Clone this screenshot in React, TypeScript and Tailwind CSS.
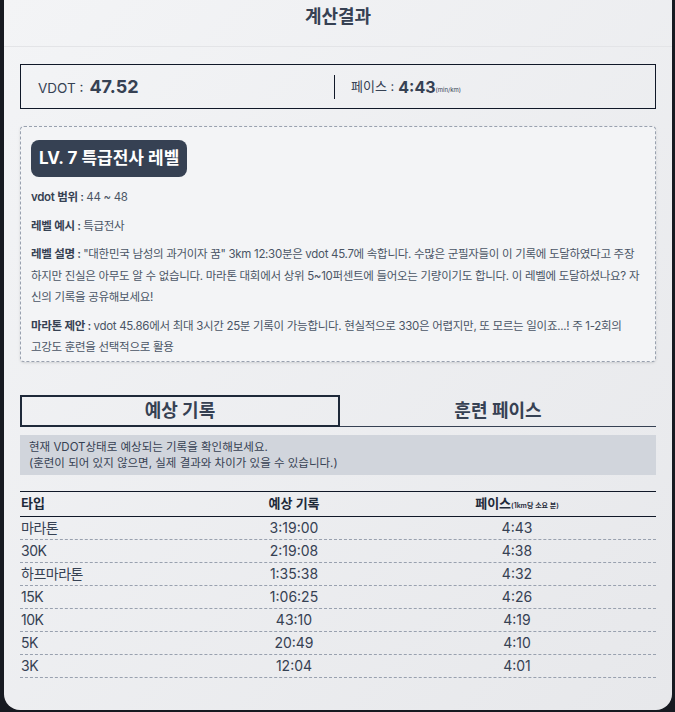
import React from 'react';

const records = [
  { type: '마라톤', time: '3:19:00', pace: '4:43' },
  { type: '30K', time: '2:19:08', pace: '4:38' },
  { type: '하프마라톤', time: '1:35:38', pace: '4:32' },
  { type: '15K', time: '1:06:25', pace: '4:26' },
  { type: '10K', time: '43:10', pace: '4:19' },
  { type: '5K', time: '20:49', pace: '4:10' },
  { type: '3K', time: '12:04', pace: '4:01' },
];

const App: React.FC = () => {
  return (
    <div
      className="min-h-screen bg-[#171a21] pl-[4px] pr-[3px]"
      style={{ fontFamily: 'Inter, "Noto Sans CJK KR", sans-serif' }}
    >
      <div className="h-[710px] rounded-b-2xl bg-gradient-to-br from-[#f3f4f6] to-[#e7e8eb] text-gray-700">
        <div className="h-[47px] border-b border-[#e3e4e7] pt-[3px] text-center text-[18px] font-semibold text-gray-700">
          계산결과
        </div>

        <div className="px-4">
          <div className="mt-[17px] flex h-[45px] items-center border border-gray-900">
            <div className="flex w-[313px] items-baseline pl-[17px]">
              <span className="text-[13.5px]">VDOT :</span>
              <span className="ml-[6px] text-[18px] font-bold text-gray-700">47.52</span>
            </div>
            <div className="flex h-[24px] flex-1 items-center border-l border-gray-900 pl-4">
              <span className="text-[13px]">페이스 :</span>
              <span className="ml-1 text-[16px] font-bold">4:43</span>
              <span className="mt-[6px] text-[6px]">(min/km)</span>
            </div>
          </div>

          <div className="mt-[17px] rounded border border-dashed border-gray-400 bg-[#f3f4f6] px-[10px] pb-[2px] pt-[13px] shadow-sm">
            <div className="inline-block rounded-lg bg-gray-700 px-2 py-[6px] text-[17px] font-bold leading-[25px] text-white">
              LV. 7 특급전사 레벨
            </div>
            <div className="mt-[10px] space-y-[7px] text-[11.5px] leading-[21.5px] tracking-[-0.3px] text-gray-600">
              <p>
                <span className="font-semibold text-gray-700">vdot 범위 : </span>44 ~ 48
              </p>
              <p>
                <span className="font-semibold text-gray-700">레벨 예시 : </span>특급전사
              </p>
              <p>
                <span className="font-semibold text-gray-700">레벨 설명 : </span>
                "대한민국 남성의 과거이자 꿈" 3km 12:30분은 vdot 45.7에 속합니다. 수많은 군필자들이 이 기록에 도달하였다고 주장
                <br />
                하지만 진실은 아무도 알 수 없습니다. 마라톤 대회에서 상위 5~10퍼센트에 들어오는 기량이기도 합니다. 이 레벨에 도달하셨나요? 자
                <br />
                신의 기록을 공유해보세요!
              </p>
              <p>
                <span className="font-semibold text-gray-700">마라톤 제안 : </span>
                vdot 45.86에서 최대 3시간 25분 기록이 가능합니다. 현실적으로 330은 어렵지만, 또 모르는 일이죠...! 주 1-2회의
                <br />
                고강도 훈련을 선택적으로 활용
              </p>
            </div>
          </div>

          <div className="mt-[33px] flex h-[32px]">
            <div className="flex flex-1 items-center justify-center border-2 border-gray-800 text-[18px] font-bold text-gray-700">
              예상 기록
            </div>
            <div className="flex flex-1 items-center justify-center border-b border-gray-700 text-[18px] font-semibold text-gray-700">
              훈련 페이스
            </div>
          </div>

          <div className="mt-[8px] bg-gray-300 px-[9px] py-[4px] text-[11.5px] leading-[16px] text-gray-700">
            현재 VDOT상태로 예상되는 기록을 확인해보세요.
            <br />
            (훈련이 되어 있지 않으면, 실제 결과와 차이가 있을 수 있습니다.)
          </div>

          <div className="mt-[16px] border-t border-gray-900">
            <div className="grid h-[25px] grid-cols-[190px_168px_1fr] items-center border-b border-gray-900 text-[13px] font-semibold text-gray-800">
              <div className="pl-[1px]">타입</div>
              <div className="text-center">예상 기록</div>
              <div className="text-center">
                페이스<span className="text-[7px]">(1km당 소요 분)</span>
              </div>
            </div>
            {records.map((r) => (
              <div
                key={r.type}
                className="grid h-[23px] grid-cols-[190px_168px_1fr] items-center border-b border-dashed border-gray-400 text-[14px] text-gray-700"
              >
                <div className="pl-[1px] tracking-[-0.5px]">{r.type}</div>
                <div className="text-center">{r.time}</div>
                <div className="text-center">{r.pace}</div>
              </div>
            ))}
          </div>
        </div>
      </div>
    </div>
  );
};

export default App;
